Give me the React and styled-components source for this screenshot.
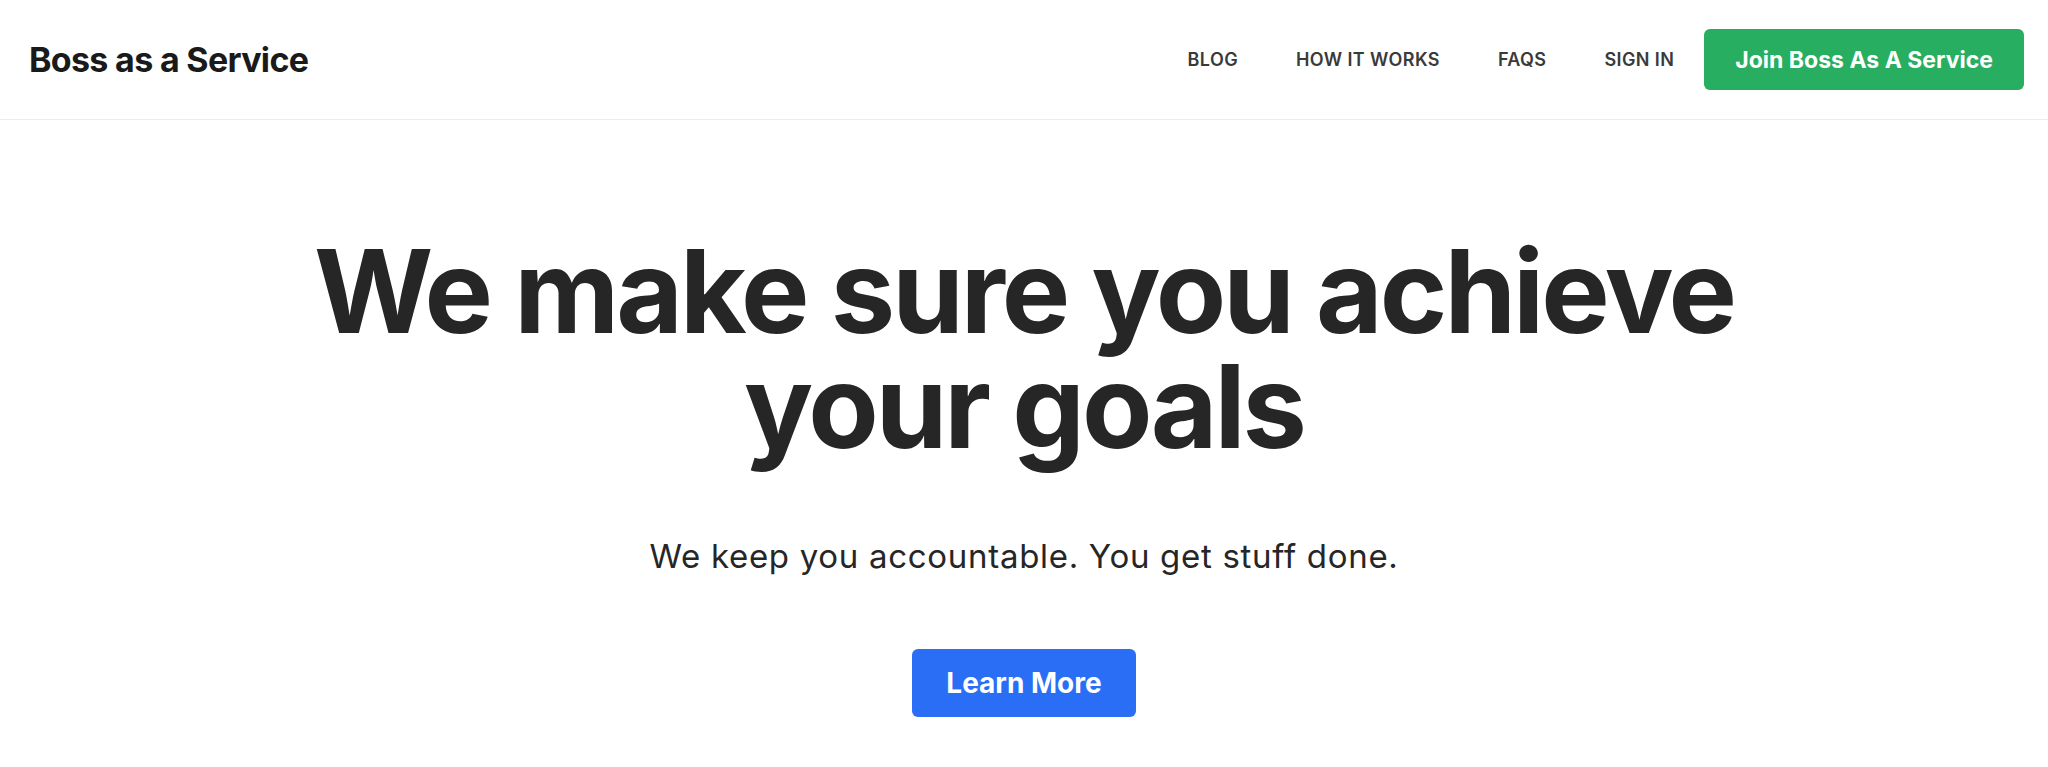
import React from 'react';
import styled, { createGlobalStyle } from 'styled-components';

const GlobalStyle = createGlobalStyle`
  * { box-sizing: border-box; }
  body {
    margin: 0;
    background: #fff;
    font-family: Inter, "Noto Sans", sans-serif;
    color: #262626;
  }
`;

const navLinks = ['BLOG', 'HOW IT WORKS', 'FAQS', 'SIGN IN'];

function App() {
  return (
    <Page>
      <GlobalStyle />
      <Header>
        <Logo href="#">Boss as a Service</Logo>
        <Nav>
          {navLinks.map((link) => (
            <NavLink key={link} href="#">{link}</NavLink>
          ))}
          <JoinButton href="#">Join Boss As A Service</JoinButton>
        </Nav>
      </Header>

      <Hero>
        <Title>We make sure you achieve<br />your goals</Title>
        <Subtitle>We keep you accountable. You get stuff done.</Subtitle>
        <LearnButton href="#">Learn More</LearnButton>
      </Hero>
    </Page>
  );
}

const Page = styled.div`
  min-height: 100vh;
  background: #fff;
`;

const Header = styled.header`
  height: 120px;
  padding: 0 24px 0 29px;
  display: flex;
  align-items: center;
  justify-content: space-between;
  border-bottom: 1px solid #e9edf1;
`;

const Logo = styled.a`
  font-size: 34px;
  font-weight: 700;
  letter-spacing: -0.02em;
  color: #1a1a1a;
  text-decoration: none;
`;

const Nav = styled.nav`
  display: flex;
  align-items: center;
  gap: 58px;
`;

const NavLink = styled.a`
  font-size: 18px;
  font-weight: 600;
  letter-spacing: 0.4px;
  color: #3a3a3a;
  text-decoration: none;
`;

const JoinButton = styled.a`
  margin-left: -28px;
  height: 61px;
  padding: 0 31px;
  display: inline-flex;
  align-items: center;
  background: #27ae60;
  color: #fff;
  border-radius: 6px;
  font-size: 23px;
  font-weight: 700;
  text-decoration: none;
`;

const Hero = styled.main`
  padding-top: 114px;
  display: flex;
  flex-direction: column;
  align-items: center;
  text-align: center;
`;

const Title = styled.h1`
  margin: 0;
  font-size: 115px;
  line-height: 1;
  font-weight: 700;
  letter-spacing: -3px;
  color: #262626;
`;

const Subtitle = styled.p`
  margin: 68px 0 0;
  font-size: 33px;
  line-height: 48px;
  font-weight: 400;
  letter-spacing: 0.7px;
  color: #262626;
`;

const LearnButton = styled.a`
  margin-top: 69px;
  height: 68px;
  padding: 0 34px;
  display: inline-flex;
  align-items: center;
  background: #2a6ef6;
  color: #fff;
  border-radius: 6px;
  font-size: 28px;
  font-weight: 700;
  text-decoration: none;
`;

export default App;
